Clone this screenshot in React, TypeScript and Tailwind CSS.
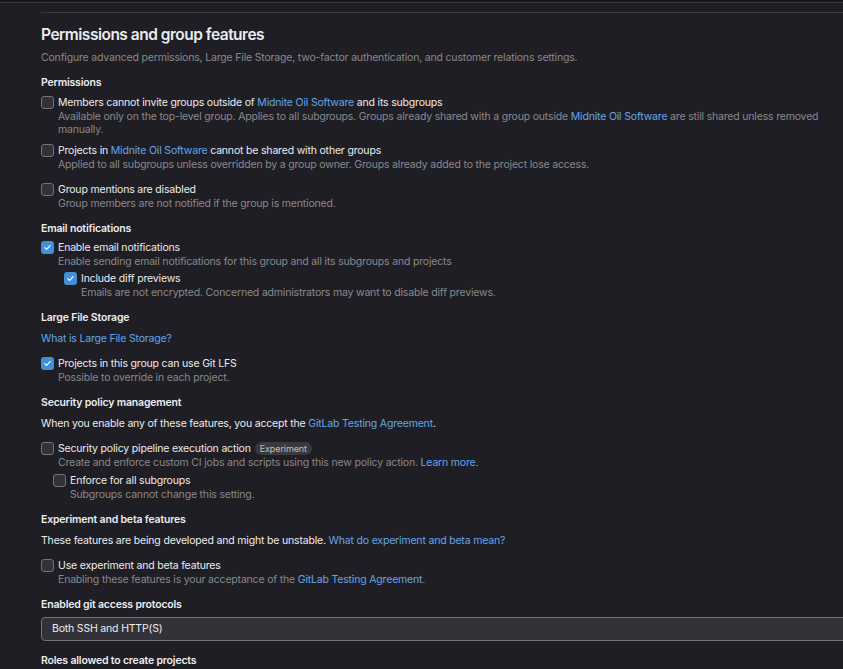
import React from "react";

const font = { fontFamily: "Inter, 'Noto Sans', sans-serif" };

function Link({ children }: { children: React.ReactNode }) {
  return <a className="text-[#63a6e9] cursor-pointer">{children}</a>;
}

function Checkbox({ checked }: { checked?: boolean }) {
  return checked ? (
    <span className="mt-[1px] flex h-[13px] w-[13px] shrink-0 items-center justify-center rounded-[3px] bg-[#428fdc]">
      <svg viewBox="0 0 12 12" className="h-[9px] w-[9px]" fill="none" stroke="white" strokeWidth="1.6" strokeLinecap="round" strokeLinejoin="round">
        <path d="M2.5 6.3 4.8 8.6 9.5 3.4" />
      </svg>
    </span>
  ) : (
    <span className="mt-[1px] h-[13px] w-[13px] shrink-0 rounded-[3px] border border-[#737278] bg-[#333238]" />
  );
}

function Option({
  checked,
  label,
  help,
  className = "",
}: {
  checked?: boolean;
  label: React.ReactNode;
  help?: React.ReactNode;
  className?: string;
}) {
  return (
    <div className={`flex gap-[4px] ${className}`}>
      <Checkbox checked={checked} />
      <div className="min-w-0">
        <div className="text-[10.5px] leading-[15px] tracking-[-0.18px] text-[#ececef]">{label}</div>
        {help && <div className="text-[10.5px] leading-[13px] tracking-[-0.18px] text-[#89888d]">{help}</div>}
      </div>
    </div>
  );
}

function Heading({ children }: { children: React.ReactNode }) {
  return <h4 className="text-[10.5px] font-semibold leading-[15px] tracking-[-0.18px] text-[#ececef]">{children}</h4>;
}

export default function App() {
  return (
    <div className="h-[669px] w-[843px] overflow-hidden bg-[#1f1e24]" style={font}>
      <div className="h-[3px] border-b border-[#3a393f] bg-[#18171d]" />
      <div className="pl-[41px] pt-[9px]">
        <div className="w-[830px] border-t border-[#3a393f]">
          <h2 className="mt-[11px] text-[15.5px] font-semibold leading-[22px] tracking-[-0.5px] text-[#ececef]">
            Permissions and group features
          </h2>
          <p className="mt-[5px] text-[10.5px] leading-[14px] tracking-[-0.18px] text-[#89888d]">
            Configure advanced permissions, Large File Storage, two-factor authentication, and customer relations settings.
          </p>

          <div className="mt-[10px]">
            <Heading>Permissions</Heading>
            <Option
              className="mt-[5px] pr-[46px]"
              label={
                <>
                  Members cannot invite groups outside of <Link>Midnite Oil Software</Link> and its subgroups
                </>
              }
              help={
                <>
                  Available only on the top-level group. Applies to all subgroups. Groups already shared with a group outside{" "}
                  <Link>Midnite Oil Software</Link> are still shared unless removed manually.
                </>
              }
            />
            <Option
              className="mt-[7px]"
              label={
                <>
                  Projects in <Link>Midnite Oil Software</Link> cannot be shared with other groups
                </>
              }
              help="Applied to all subgroups unless overridden by a group owner. Groups already added to the project lose access."
            />
            <Option
              className="mt-[11px]"
              label="Group mentions are disabled"
              help="Group members are not notified if the group is mentioned."
            />
          </div>

          <div className="mt-[11px]">
            <Heading>Email notifications</Heading>
            <Option
              checked
              className="mt-[4px]"
              label="Enable email notifications"
              help="Enable sending email notifications for this group and all its subgroups and projects"
            />
            <Option
              checked
              className="ml-[23px] mt-[3px]"
              label="Include diff previews"
              help="Emails are not encrypted. Concerned administrators may want to disable diff previews."
            />
          </div>

          <div className="mt-[11px]">
            <Heading>Large File Storage</Heading>
            <p className="mt-[6px] text-[10.5px] leading-[15px] tracking-[-0.18px]">
              <Link>What is Large File Storage?</Link>
            </p>
            <Option
              checked
              className="mt-[10px]"
              label="Projects in this group can use Git LFS"
              help="Possible to override in each project."
            />
          </div>

          <div className="mt-[11px]">
            <Heading>Security policy management</Heading>
            <p className="mt-[6px] text-[10.5px] leading-[15px] tracking-[-0.18px] text-[#ececef]">
              When you enable any of these features, you accept the <Link>GitLab Testing Agreement</Link>.
            </p>
            <Option
              className="mt-[10px]"
              label={
                <span className="flex items-center gap-[4px]">
                  Security policy pipeline execution action
                  <span className="rounded-full bg-[#3a393f] px-[5px] text-[9px] leading-[13px] tracking-[-0.1px] text-[#bfbfc3]">Experiment</span>
                </span>
              }
              help={
                <>
                  Create and enforce custom CI jobs and scripts using this new policy action. <Link>Learn more.</Link>
                </>
              }
            />
            <Option
              className="ml-[12px] mt-[4px]"
              label="Enforce for all subgroups"
              help="Subgroups cannot change this setting."
            />
          </div>

          <div className="mt-[11px]">
            <Heading>Experiment and beta features</Heading>
            <p className="mt-[6px] text-[10.5px] leading-[15px] tracking-[-0.18px] text-[#ececef]">
              These features are being developed and might be unstable. <Link>What do experiment and beta mean?</Link>
            </p>
            <Option
              className="mt-[10px]"
              label="Use experiment and beta features"
              help={
                <>
                  Enabling these features is your acceptance of the <Link>GitLab Testing Agreement</Link>.
                </>
              }
            />
          </div>

          <div className="mt-[11px]">
            <Heading>Enabled git access protocols</Heading>
            <div className="mt-[5px] flex h-[24px] items-center rounded-[4px] border border-[#737278] bg-[#333238] px-[10px] text-[10.5px] tracking-[-0.18px] text-[#ececef]">
              Both SSH and HTTP(S)
            </div>
          </div>

          <div className="mt-[12px]">
            <Heading>Roles allowed to create projects</Heading>
          </div>
        </div>
      </div>
    </div>
  );
}
